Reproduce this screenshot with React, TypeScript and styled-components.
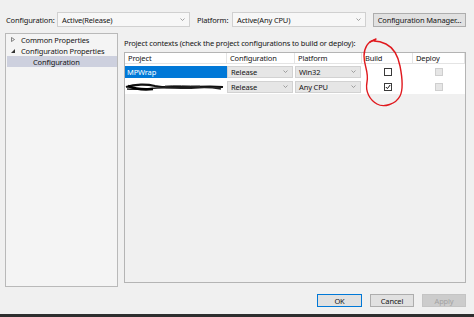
import React from "react";
import styled, { createGlobalStyle } from "styled-components";

const Global = createGlobalStyle`
  html, body { margin: 0; padding: 0; background: #f0f0f0; }
  body {
    font-family: "Noto Sans", "Open Sans", sans-serif;
    font-size: 7.5px;
    letter-spacing: -0.15px;
    color: #141414;
  }
`;

const Dialog = styled.div`
  position: relative;
  width: 474px;
  height: 317px;
  background: #f0f0f0;
  display: flex;
  flex-direction: column;
  overflow: hidden;
`;

const TopBar = styled.div`
  display: flex;
  align-items: center;
  height: 15px;
  margin-top: 12px;
  padding-left: 6px;
`;

const Label = styled.span<{ $w: number; $ml?: number }>`
  flex: none;
  width: ${(p) => p.$w}px;
  margin-left: ${(p) => p.$ml ?? 0}px;
  white-space: nowrap;
`;

const Combo = styled.div<{ $w: number }>`
  flex: none;
  box-sizing: border-box;
  width: ${(p) => p.$w}px;
  height: 15px;
  border: 1px solid #d0d0d0;
  background: #f7f7f7;
  display: flex;
  align-items: center;
  justify-content: space-between;
  padding: 0 4px 0 4px;
  white-space: nowrap;
`;

const Button = styled.div<{ $w: number; $variant?: "default" | "normal" | "disabled"; $ml?: number }>`
  flex: none;
  box-sizing: border-box;
  width: ${(p) => p.$w}px;
  height: ${(p) => (p.$variant === undefined ? 14 : 13)}px;
  margin-left: ${(p) => p.$ml ?? 0}px;
  display: flex;
  align-items: center;
  justify-content: center;
  white-space: nowrap;
  background: ${(p) => (p.$variant === "disabled" ? "#cccccc" : "#e1e1e1")};
  color: ${(p) => (p.$variant === "disabled" ? "#a3a3a3" : "#141414")};
  border: 1px solid
    ${(p) =>
      p.$variant === "default" ? "#0078d7" : p.$variant === "disabled" ? "#c4c4c4" : "#adadad"};
`;

const Main = styled.div`
  display: flex;
  margin-top: 6px;
  padding-left: 5px;
  height: 254px;
`;

const Tree = styled.div`
  flex: none;
  box-sizing: border-box;
  width: 113px;
  height: 254px;
  border: 1px solid #b9b9b9;
  background: #f4f4f4;
  padding: 0 0 0 1px;
`;

const TreeRow = styled.div<{ $indent: number; $selected?: boolean }>`
  display: flex;
  align-items: center;
  height: 11px;
  padding-left: ${(p) => p.$indent}px;
  background: ${(p) => (p.$selected ? "#cdd0de" : "transparent")};
  white-space: nowrap;
`;

const Toggle = styled.span`
  display: inline-flex;
  width: 10px;
  align-items: center;
`;

const Right = styled.div`
  flex: none;
  width: 342px;
  margin-left: 6px;
  display: flex;
  flex-direction: column;
`;

const Caption = styled.div`
  height: 19px;
  display: flex;
  align-items: center;
  padding-top: 1px;
  box-sizing: border-box;
  white-space: nowrap;
`;

const TableBox = styled.div`
  box-sizing: border-box;
  height: 231px;
  border: 1px solid #b4b4b4;
  background: #f0f0f0;
`;

const Grid = styled.div`
  display: grid;
  grid-template-columns: 102px 68px 67px 51px 52px;
  grid-template-rows: 11px 15px 15px;
  background: #ffffff;
`;

const HeadCell = styled.div`
  display: flex;
  align-items: center;
  padding-left: 3px;
  border-right: 1px solid #e4e4e4;
  border-bottom: 1px solid #e4e4e4;
  white-space: nowrap;
`;

const Cell = styled.div<{ $center?: boolean }>`
  display: flex;
  align-items: center;
  justify-content: ${(p) => (p.$center ? "center" : "flex-start")};
  white-space: nowrap;
`;

const SelectedName = styled.div`
  box-sizing: border-box;
  width: 100%;
  height: 12px;
  background: #0078d7;
  color: #ffffff;
  display: flex;
  align-items: center;
  padding-left: 2px;
`;

const CellCombo = styled.div`
  box-sizing: border-box;
  width: 66px;
  height: 12px;
  background: #e6e6e6;
  border: 1px solid #d2d2d2;
  display: flex;
  align-items: center;
  justify-content: space-between;
  padding: 0 4px 0 3px;
`;

const Check = styled.div<{ $disabled?: boolean }>`
  box-sizing: border-box;
  width: 8px;
  height: 8px;
  border: 1px solid ${(p) => (p.$disabled ? "#cfcfcf" : "#3a3a3a")};
  background: ${(p) => (p.$disabled ? "#e6e6e6" : "#ffffff")};
  display: flex;
  align-items: center;
  justify-content: center;
`;

const Footer = styled.div`
  display: flex;
  justify-content: flex-end;
  margin-top: 7px;
  padding-right: 8px;
  height: 13px;
`;

const Strip = styled.div`
  margin-top: auto;
  height: 3px;
  background: #2e2e2e;
`;

const Overlay = styled.svg`
  position: absolute;
  left: 0;
  top: 0;
  pointer-events: none;
`;

const Chevron = ({ color = "#8a8a8a" }: { color?: string }) => (
  <svg width="5" height="3" viewBox="0 0 5 3">
    <path d="M0.5 0.5 L2.5 2.5 L4.5 0.5" fill="none" stroke={color} strokeWidth="0.8" />
  </svg>
);

const Scribble = () => (
  <svg width="100" height="12" viewBox="0 0 100 12">
    <path d="M1 6 C10 3 22 3 30 5 C40 7 48 6 60 6 C72 6 86 5 98 6" stroke="#111" strokeWidth="2.2" fill="none" />
    <path d="M2 8 C12 9 22 8 32 7 C44 6 56 8 70 7 C80 6 90 7 96 8" stroke="#222" strokeWidth="1.4" fill="none" />
    <path d="M3 5 C10 8 18 9 28 8" stroke="#000" strokeWidth="2.6" fill="none" />
    <path d="M40 5 C50 4 62 5 75 5" stroke="#444" strokeWidth="0.9" fill="none" />
  </svg>
);

export default function App() {
  return (
    <>
      <Global />
      <Dialog>
        <TopBar>
          <Label $w={51}>Configuration:</Label>
          <Combo $w={133}>
            <span>Active(Release)</span>
            <Chevron />
          </Combo>
          <Label $w={35} $ml={7}>Platform:</Label>
          <Combo $w={134}>
            <span>Active(Any CPU)</span>
            <Chevron />
          </Combo>
          <Button $w={93} $ml={7}>Configuration Manager...</Button>
        </TopBar>

        <Main>
          <Tree>
            <TreeRow $indent={4}>
              <Toggle>
                <svg width="4" height="5" viewBox="0 0 4 5">
                  <path d="M0.5 0.5 L3.5 2.5 L0.5 4.5 Z" fill="none" stroke="#555" strokeWidth="0.7" />
                </svg>
              </Toggle>
              Common Properties
            </TreeRow>
            <TreeRow $indent={4}>
              <Toggle>
                <svg width="4" height="4" viewBox="0 0 4 4">
                  <path d="M4 0 L4 4 L0 4 Z" fill="#333" />
                </svg>
              </Toggle>
              Configuration Properties
            </TreeRow>
            <TreeRow $indent={26} $selected>
              Configuration
            </TreeRow>
          </Tree>

          <Right>
            <Caption>Project contexts (check the project configurations to build or deploy):</Caption>
            <TableBox>
              <Grid>
                <HeadCell>Project</HeadCell>
                <HeadCell>Configuration</HeadCell>
                <HeadCell>Platform</HeadCell>
                <HeadCell>Build</HeadCell>
                <HeadCell>Deploy</HeadCell>

                <Cell>
                  <SelectedName>MPWrap</SelectedName>
                </Cell>
                <Cell>
                  <CellCombo>
                    <span>Release</span>
                    <Chevron />
                  </CellCombo>
                </Cell>
                <Cell>
                  <CellCombo>
                    <span>Win32</span>
                    <Chevron />
                  </CellCombo>
                </Cell>
                <Cell $center>
                  <Check />
                </Cell>
                <Cell $center>
                  <Check $disabled />
                </Cell>

                <Cell>
                  <Scribble />
                </Cell>
                <Cell>
                  <CellCombo>
                    <span>Release</span>
                    <Chevron />
                  </CellCombo>
                </Cell>
                <Cell>
                  <CellCombo>
                    <span>Any CPU</span>
                    <Chevron />
                  </CellCombo>
                </Cell>
                <Cell $center>
                  <Check>
                    <svg width="6" height="6" viewBox="0 0 6 6">
                      <path d="M0.8 3 L2.4 4.6 L5.2 1" fill="none" stroke="#111" strokeWidth="1" />
                    </svg>
                  </Check>
                </Cell>
                <Cell $center>
                  <Check $disabled />
                </Cell>
              </Grid>
            </TableBox>
          </Right>
        </Main>

        <Footer>
          <Button $w={45} $variant="default">OK</Button>
          <Button $w={44} $variant="normal" $ml={8}>Cancel</Button>
          <Button $w={44} $variant="disabled" $ml={8}>Apply</Button>
        </Footer>
        <Strip />

        <Overlay width="474" height="317" viewBox="0 0 474 317">
          <path
            d="M375 40 C368 41 364 48 364 56 C364 66 369 72 367 82 C365 92 370 100 377 104 C384 108 396 104 400 96 C404 88 402 76 400 66 C398 56 394 48 386 44 C382 42 378 41 374 41"
            fill="none"
            stroke="#e0191e"
            strokeWidth="1.4"
            strokeLinecap="round"
          />
          <path d="M370 42 L376 39" fill="none" stroke="#e0191e" strokeWidth="1.4" strokeLinecap="round" />
        </Overlay>
      </Dialog>
    </>
  );
}
